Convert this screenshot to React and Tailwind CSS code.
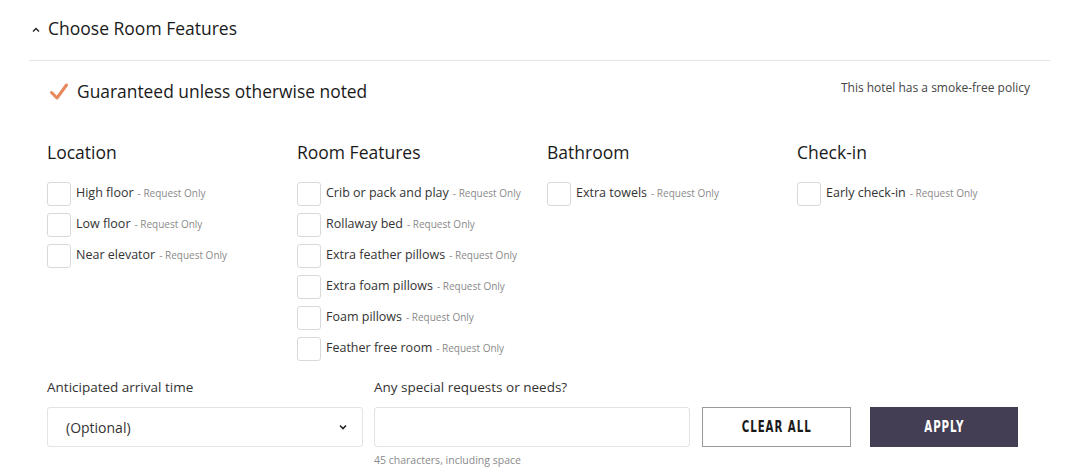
import React from "react";

const font = { fontFamily: '"Open Sans", "Noto Sans", Arial, sans-serif' };
const btnFont = { fontFamily: '"DejaVu Sans", sans-serif' };

function Row({ label }) {
  return (
    <div className="flex items-center h-[31px]">
      <span className="w-6 h-6 border border-[#d9d9d9] rounded-[3px] bg-white shrink-0" />
      <span className="ml-[5px] text-[12.5px] text-[#333]">{label}</span>
      <span className="ml-[4px] text-[10px] text-[#8a8a8a]">- Request Only</span>
    </div>
  );
}

function Col({ title, items }) {
  return (
    <div className="w-[250px]">
      <h3 className="text-[17.5px] leading-[22px] text-[#1a1a1a] mb-[15px]">{title}</h3>
      <div>
        {items.map((i) => (
          <Row key={i} label={i} />
        ))}
      </div>
    </div>
  );
}

export default function App() {
  return (
    <div className="w-[1080px] h-[469px] bg-white overflow-hidden" style={font}>
      <div className="pl-[29px] pr-[30px]">
        <div className="flex items-center h-[61px] pb-[4px] border-b border-[#e6e6e6]">
          <svg width="10" height="10" viewBox="0 0 10 10" className="ml-[2px] mt-[3px]">
            <path d="M2 6.5 L5 3.5 L8 6.5" stroke="#222" strokeWidth="1.4" fill="none" />
          </svg>
          <span className="ml-[7px] text-[17.5px] text-[#1a1a1a]">Choose Room Features</span>
        </div>
        <div className="flex items-start justify-between pt-[17px] pl-[20px]">
          <div className="flex items-center">
            <svg width="20" height="20" viewBox="0 0 20 20" className="mt-[2px]">
              <path d="M2.5 10.5 L8 16 L17.5 3" stroke="#e8875a" strokeWidth="3" strokeLinecap="round" strokeLinejoin="round" fill="none" />
            </svg>
            <span className="ml-[8px] text-[17.4px] text-[#1a1a1a]">Guaranteed unless otherwise noted</span>
          </div>
          <span className="text-[12px] text-[#444] mr-[20px] mt-[1px]">This hotel has a smoke-free policy</span>
        </div>
        <div className="flex pl-[18px] pt-[37px]">
          <Col title="Location" items={["High floor", "Low floor", "Near elevator"]} />
          <Col
            title="Room Features"
            items={[
              "Crib or pack and play",
              "Rollaway bed",
              "Extra feather pillows",
              "Extra foam pillows",
              "Foam pillows",
              "Feather free room",
            ]}
          />
          <Col title="Bathroom" items={["Extra towels"]} />
          <Col title="Check-in" items={["Early check-in"]} />
        </div>
        <div className="flex items-start pl-[18px] pt-[12px]">
          <div className="w-[316px]">
            <div className="text-[13.5px] text-[#333] h-[31px] pt-[1px]">Anticipated arrival time</div>
            <div className="h-10 border border-[#e3e3e3] rounded-[3px] flex items-center justify-between px-[18px]">
              <span className="text-[14px] text-[#333]">(Optional)</span>
              <svg width="10" height="10" viewBox="0 0 10 10" className="mr-[-4px]">
                <path d="M2 3.5 L5 6.5 L8 3.5" stroke="#222" strokeWidth="1.6" fill="none" />
              </svg>
            </div>
          </div>
          <div className="w-[316px] ml-[11px]">
            <div className="text-[13.5px] text-[#333] h-[31px] pt-[1px]">Any special requests or needs?</div>
            <div className="h-10 border border-[#e3e3e3] rounded-[3px]" />
            <div className="text-[10.5px] text-[#8a8a8a] mt-[6px]">45 characters, including space</div>
          </div>
          <button
            className="ml-[12px] mt-[31px] w-[149px] h-10 border border-[#9a9a9a] bg-white flex items-center justify-center"
          >
            <span className="inline-block scale-x-[0.64] text-[16px] font-bold tracking-[1.5px] text-[#1a1a1a] whitespace-nowrap" style={btnFont}>
              CLEAR ALL
            </span>
          </button>
          <button
            className="ml-[19px] mt-[31px] w-[148px] h-10 bg-[#443e55] flex items-center justify-center"
          >
            <span className="inline-block scale-x-[0.64] text-[16px] font-bold tracking-[1.5px] text-white whitespace-nowrap" style={btnFont}>
              APPLY
            </span>
          </button>
        </div>
      </div>
    </div>
  );
}
